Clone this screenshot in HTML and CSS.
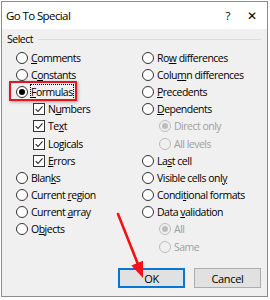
FILE: index.html
```html
<!DOCTYPE html>
<html>
<head>
<meta charset="utf-8">
<link rel="stylesheet" href="styles.css">
</head>
<body>
<div class="dialog">
  <div class="titlebar">
    <span class="title">Go To Special</span>
    <span class="help">?</span>
    <span class="close">&#x2715;</span>
  </div>
  <div class="content">
    <div class="group-head"><span>Select</span></div>
    <div class="cols">
      <div class="col">
        <div class="row"><span class="radio"></span><span><u>C</u>omments</span></div>
        <div class="row"><span class="radio"></span><span>C<u>o</u>nstants</span></div>
        <div class="row hl"><span class="radio on"></span><span class="focus"><u>F</u>ormulas</span><span class="redbox"></span></div>
        <div class="row sub"><span class="check"><svg viewBox="0 0 12 12"><path d="M2 6.2 L4.8 9 L10.2 2.8" /></svg></span><span>N<u>u</u>mbers</span></div>
        <div class="row sub"><span class="check"><svg viewBox="0 0 12 12"><path d="M2 6.2 L4.8 9 L10.2 2.8" /></svg></span><span>Te<u>x</u>t</span></div>
        <div class="row sub"><span class="check"><svg viewBox="0 0 12 12"><path d="M2 6.2 L4.8 9 L10.2 2.8" /></svg></span><span>Lo<u>g</u>icals</span></div>
        <div class="row sub"><span class="check"><svg viewBox="0 0 12 12"><path d="M2 6.2 L4.8 9 L10.2 2.8" /></svg></span><span><u>E</u>rrors</span></div>
        <div class="row"><span class="radio"></span><span>Blan<u>k</u>s</span></div>
        <div class="row"><span class="radio"></span><span>Current <u>r</u>egion</span></div>
        <div class="row"><span class="radio"></span><span>Current <u>a</u>rray</span></div>
        <div class="row"><span class="radio"></span><span>O<u>b</u>jects</span></div>
      </div>
      <div class="col">
        <div class="row"><span class="radio"></span><span>Ro<u>w</u> differences</span></div>
        <div class="row"><span class="radio"></span><span>Colu<u>m</u>n differences</span></div>
        <div class="row"><span class="radio"></span><span><u>P</u>recedents</span></div>
        <div class="row"><span class="radio"></span><span><u>D</u>ependents</span></div>
        <div class="row sub2 dis"><span class="radio on"></span><span>Direct only</span></div>
        <div class="row sub2 dis"><span class="radio"></span><span>All levels</span></div>
        <div class="row"><span class="radio"></span><span>La<u>s</u>t cell</span></div>
        <div class="row"><span class="radio"></span><span>Visible cells onl<u>y</u></span></div>
        <div class="row"><span class="radio"></span><span>Condi<u>t</u>ional formats</span></div>
        <div class="row"><span class="radio"></span><span>Data <u>v</u>alidation</span></div>
        <div class="row sub2 dis"><span class="radio on"></span><span>All</span></div>
        <div class="row sub2 dis"><span class="radio"></span><span>Same</span></div>
      </div>
    </div>
    <div class="buttons">
      <button class="btn default">OK</button>
      <button class="btn">Cancel</button>
    </div>
  </div>
</div>
<svg class="arrow" width="270" height="300" viewBox="0 0 270 300">
  <line x1="118" y1="214" x2="137.5" y2="263" stroke="#f01414" stroke-width="2.6" stroke-linecap="round"/>
  <polygon points="143,278 131.4,265.4 143,260.8" fill="#f01414"/>
</svg>
</body>
</html>
```

FILE: styles.css
```css
html, body {
  margin: 0;
  padding: 0;
  background: #ffffff;
}
body {
  position: relative;
  width: 270px;
  height: 300px;
  overflow: hidden;
  font-family: "Open Sans", "Noto Sans", sans-serif;
  font-size: 10.5px;
  letter-spacing: -0.5px;
  color: #000;
}
.dialog {
  margin: 1px 0 0 1px;
  width: 265px;
  height: 294px;
  border: 1px solid #8c8c8c;
  background: #f0f0f0;
  display: flex;
  flex-direction: column;
}
.titlebar {
  height: 27px;
  flex: none;
  background: #ffffff;
  display: flex;
  align-items: center;
  font-size: 11.5px;
  letter-spacing: -0.6px;
}
.title {
  padding-left: 4px;
  flex: 1;
}
.help {
  width: 12px;
  text-align: center;
  margin-right: 12px;
  letter-spacing: 0;
}
.close {
  width: 12px;
  text-align: center;
  margin-right: 9px;
  font-size: 12px;
  letter-spacing: 0;
}
.content {
  flex: 1;
  display: flex;
  flex-direction: column;
  padding: 3px 6px 8px 5px;
}
.group-head {
  display: flex;
  align-items: center;
  gap: 5px;
  height: 14px;
  line-height: 14px;
}
.group-head::after {
  content: "";
  flex: 1;
  border-top: 1px solid #dcdcdc;
}
.cols {
  display: grid;
  grid-template-columns: 126px 1fr;
  padding-left: 9px;
  margin-top: 3px;
}
.row {
  height: 17.2px;
  display: flex;
  align-items: center;
  gap: 3px;
  white-space: nowrap;
  position: relative;
}
.row.sub {
  padding-left: 17px;
}
.row.sub2 {
  padding-left: 17px;
}
.radio {
  width: 10px;
  height: 10px;
  border: 1px solid #333333;
  border-radius: 50%;
  background: #ffffff;
  position: relative;
  flex: none;
}
.radio.on::after {
  content: "";
  position: absolute;
  left: 2px;
  top: 2px;
  width: 6px;
  height: 6px;
  border-radius: 50%;
  background: #000;
}
.dis {
  color: #a0a0a0;
}
.dis .radio {
  border-color: #bcbcbc;
  background: #f0f0f0;
}
.dis .radio.on::after {
  background: #bcbcbc;
}
.check {
  width: 10px;
  height: 10px;
  border: 1px solid #333333;
  background: #ffffff;
  flex: none;
  display: flex;
}
.check svg {
  width: 10px;
  height: 10px;
  fill: none;
  stroke: #222;
  stroke-width: 1.3;
}
.focus {
  outline: 1px dotted #000;
  outline-offset: 0px;
}
.redbox {
  position: absolute;
  left: -7px;
  top: -2px;
  width: 64px;
  height: 16px;
  border: 2px solid #e8141c;
  box-shadow: 1px 1px 3px rgba(0,0,0,0.35);
}
.buttons {
  margin-top: auto;
  display: flex;
  justify-content: flex-end;
  gap: 9px;
}
.btn {
  width: 67px;
  height: 20px;
  padding: 0;
  font-family: "Open Sans", "Noto Sans", sans-serif;
  font-size: 11px;
  letter-spacing: -0.3px;
  color: #000;
  background: #e1e1e1;
  border: 1px solid #adadad;
}
.btn.default {
  border: 1px solid #0078d7;
  box-shadow: inset 0 0 0 1px #0078d7;
}
.arrow {
  position: absolute;
  left: 0;
  top: 0;
  pointer-events: none;
}
```
